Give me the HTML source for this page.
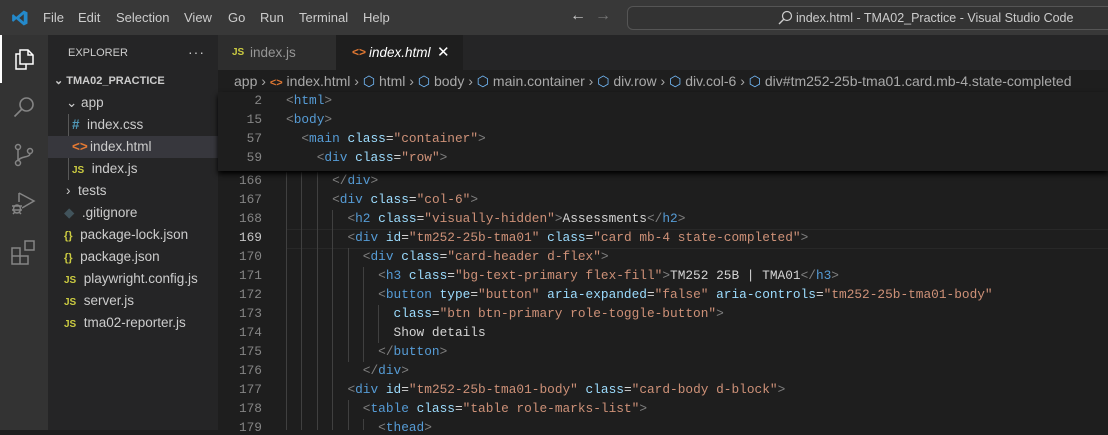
<!DOCTYPE html>
<html><head><meta charset="utf-8"><style>
*{margin:0;padding:0;box-sizing:border-box}
body{width:1108px;height:430px;overflow:hidden;background:#1e1e1e;font-family:"Liberation Sans",sans-serif;font-size:13px;color:#ccc;position:relative}
.abs{position:absolute}
#title{left:0;top:0;width:1108px;height:35px;background:#383838}
.menu{top:10px;font-size:13px;color:#ccc}
#act{left:0;top:35px;width:48px;height:395px;background:#333}
#side{left:48px;top:35px;width:170px;height:395px;background:#252526}
.row{position:absolute;left:0;width:170px;height:22px;line-height:22px;font-size:13.5px;color:#ccc;white-space:nowrap}
#tabs{left:218px;top:35px;width:890px;height:35px;background:#252526}
.mono{font-family:"Liberation Mono",monospace;font-size:12.8px;white-space:pre}
.ln{position:absolute;left:218px;width:44px;text-align:right;color:#858585}
.cd{position:absolute;left:286px}
.t{color:#808080}.n{color:#569cd6}.a{color:#9cdcfe}.s{color:#ce9178}.x{color:#d4d4d4}
.g{position:absolute;width:1px;background:#404040}
.bc{top:73px;font-size:14px;color:#a9a9a9;white-space:nowrap}
</style></head><body>
<div id="title" class="abs">
<svg class="abs" style="left:11px;top:9px" width="18" height="18" viewBox="0 0 24 24"><path d="M17 2 L22 4.5 V19.5 L17 22 L7 13.5 L3 17 L1.5 16 V8 L3 7 L7 10.5 Z M17 7 L11 12 L17 17 Z" fill="#2489ca"/></svg>
<span class="abs menu" style="left:43px">File</span>
<span class="abs menu" style="left:78px">Edit</span>
<span class="abs menu" style="left:116px">Selection</span>
<span class="abs menu" style="left:184px">View</span>
<span class="abs menu" style="left:228px">Go</span>
<span class="abs menu" style="left:260px">Run</span>
<span class="abs menu" style="left:299px">Terminal</span>
<span class="abs menu" style="left:363px">Help</span>
<span class="abs" style="left:570px;top:7px;font-size:16px;color:#ccc">←</span>
<span class="abs" style="left:595px;top:7px;font-size:16px;color:#777">→</span>
<div class="abs" style="left:627px;top:6px;width:490px;height:24px;border:1px solid #555;border-radius:6px;background:#333"></div>
<svg class="abs" style="left:777px;top:10px" width="16" height="16" viewBox="0 0 16 16"><circle cx="10" cy="6" r="4.5" stroke="#ccc" fill="none" stroke-width="1.2"/><path d="M7 9 L2 14" stroke="#ccc" stroke-width="1.4"/></svg>
<span class="abs" style="left:796px;top:11px;font-size:12.5px;color:#ccc">index.html - TMA02_Practice - Visual Studio Code</span>
</div>
<div id="act" class="abs">
<div class="abs" style="left:0;top:0;width:2px;height:48px;background:#fff"></div>
<svg class="abs" style="left:12px;top:12px" width="24" height="24" viewBox="0 0 24 24" fill="none" stroke="#fff" stroke-width="1.5"><path d="M8 3 H16 L21 8 V17 H8 Z M16 3 V8 H21"/><path d="M8 7 H4 V22 H14 V17"/></svg>
<svg class="abs" style="left:12px;top:60px" width="24" height="24" viewBox="0 0 24 24" fill="none" stroke="#858585" stroke-width="1.6"><circle cx="14.5" cy="9.5" r="6.5"/><path d="M10 14 L2.5 21.5"/></svg>
<svg class="abs" style="left:12px;top:108px" width="24" height="24" viewBox="0 0 24 24" fill="none" stroke="#858585" stroke-width="1.5"><circle cx="6" cy="4" r="2.5"/><circle cx="6" cy="20" r="2.5"/><circle cx="18" cy="8" r="2.5"/><path d="M6 6.5 V17.5 M18 10.5 C18 15 8 13 6.5 17.5"/></svg>
<svg class="abs" style="left:10px;top:155px" width="26" height="26" viewBox="0 0 26 26" fill="none" stroke="#858585" stroke-width="1.5"><path d="M9 3 L24 11 L12 18"/><path d="M9 3 V12"/><ellipse cx="7" cy="19" rx="3.5" ry="4"/><path d="M2 16 H12 M2 20 H12 M3 24 L5 22 M11 24 L9 22"/></svg>
<svg class="abs" style="left:11px;top:205px" width="26" height="26" viewBox="0 0 26 26" fill="none" stroke="#858585" stroke-width="1.5"><path d="M1 8 H9 V24 H1 Z M1 16 H17 V24 H9"/><rect x="14" y="1" width="9" height="9"/></svg>
</div>
<div id="side" class="abs">
<div class="row" style="top:7px;left:20px;font-size:11px">EXPLORER</div>
<div class="row" style="top:6px;left:140px;font-size:14px;letter-spacing:1px">···</div>
<div class="row" style="top:35px;left:6px;font-size:11px;font-weight:bold">⌄ TMA02_PRACTICE</div>
<div class="row" style="top:57px;left:18px">⌄ app</div>
<div class="abs" style="left:20px;top:79px;width:1px;height:66px;background:#585858"></div>
<div class="row" style="top:79px;left:24px"><span style="color:#519aba;font-weight:bold">#</span>&nbsp; index.css</div>
<div class="row" style="top:101px;left:0;background:#37373d"><span style="position:absolute;left:24px;color:#e37933;font-weight:bold">&lt;&gt;</span><span style="position:absolute;left:42px">index.html</span></div>
<div class="row" style="top:123px;left:24px"><span style="color:#cbcb41;font-size:10px;font-weight:bold">JS</span>&nbsp; index.js</div>
<div class="row" style="top:145px;left:18px">›&nbsp; tests</div>
<div class="row" style="top:167px;left:16px"><span style="color:#41535b">◆</span>&nbsp; .gitignore</div>
<div class="row" style="top:189px;left:16px"><span style="color:#cbcb41;font-weight:bold;font-size:11px">{}</span>&nbsp; package-lock.json</div>
<div class="row" style="top:211px;left:16px"><span style="color:#cbcb41;font-weight:bold;font-size:11px">{}</span>&nbsp; package.json</div>
<div class="row" style="top:233px;left:16px"><span style="color:#cbcb41;font-size:10px;font-weight:bold">JS</span>&nbsp; playwright.config.js</div>
<div class="row" style="top:255px;left:16px"><span style="color:#cbcb41;font-size:10px;font-weight:bold">JS</span>&nbsp; server.js</div>
<div class="row" style="top:277px;left:16px"><span style="color:#cbcb41;font-size:10px;font-weight:bold">JS</span>&nbsp; tma02-reporter.js</div>
</div>
<div id="tabs" class="abs">
<div class="abs" style="left:0;top:0;width:118px;height:35px;background:#2d2d2d;line-height:35px;color:#969696;font-size:13.5px"><span style="position:absolute;left:14px;color:#cbcb41;font-size:10px;font-weight:bold">JS</span><span style="position:absolute;left:32px">index.js</span></div>
<div class="abs" style="left:118px;top:0;width:127px;height:35px;background:#1e1e1e;line-height:35px;color:#fff;font-size:13.5px"><span style="position:absolute;left:16px;color:#e37933;font-weight:bold;font-size:12px">&lt;&gt;</span><span style="position:absolute;left:33px;font-style:italic">index.html</span><span style="position:absolute;left:101px;font-size:15px">✕</span></div>
</div>
<div class="abs bc" style="left:234px">app <span>›</span> <span style="color:#e37933;font-weight:bold;font-size:11px">&lt;&gt;</span> index.html <span>›</span> <span style="color:#75beff">⬡</span> html <span>›</span> <span style="color:#75beff">⬡</span> body <span>›</span> <span style="color:#75beff">⬡</span> main.container <span>›</span> <span style="color:#75beff">⬡</span> div.row <span>›</span> <span style="color:#75beff">⬡</span> div.col-6 <span>›</span> <span style="color:#75beff">⬡</span> div#tm252-25b-tma01.card.mb-4.state-completed</div>
<div class="abs" style="left:218px;top:92px;width:890px;height:79px;background:#1e1e1e;box-shadow:0 3px 5px #000;z-index:2">
</div>
<div class="abs mono" style="left:0;top:0;z-index:3">
<div class="ln" style="top:93px">2</div><div class="cd" style="top:93px"><span class="t">&lt;</span><span class="n">html</span><span class="t">&gt;</span></div>
<div class="ln" style="top:112px">15</div><div class="cd" style="top:112px"><span class="t">&lt;</span><span class="n">body</span><span class="t">&gt;</span></div>
<div class="ln" style="top:131px">57</div><div class="cd" style="top:131px">  <span class="t">&lt;</span><span class="n">main</span> <span class="a">class</span><span class="x">=</span><span class="s">"container"</span><span class="t">&gt;</span></div>
<div class="ln" style="top:150px">59</div><div class="cd" style="top:150px">    <span class="t">&lt;</span><span class="n">div</span> <span class="a">class</span><span class="x">=</span><span class="s">"row"</span><span class="t">&gt;</span></div>
</div>
<div class="abs" style="left:286px;top:229px;width:822px;height:20px;border:1px solid #282828;border-left:none;border-right:none"></div>
<div class="g" style="left:286px;top:172px;height:258px"></div>
<div class="g" style="left:301px;top:172px;height:258px"></div>
<div class="g" style="left:317px;top:172px;height:258px"></div>
<div class="g" style="left:332px;top:210px;height:220px"></div>
<div class="g" style="left:348px;top:248px;height:114px"></div>
<div class="g" style="left:363px;top:267px;height:95px"></div>
<div class="g" style="left:348px;top:400px;height:30px"></div>
<div class="g" style="left:363px;top:419px;height:11px"></div>
<div class="g" style="left:378px;top:305px;height:38px"></div>
<div class="abs mono" style="left:0;top:0">
<div class="ln" style="top:173px">166</div><div class="cd" style="top:173px">      <span class="t">&lt;/</span><span class="n">div</span><span class="t">&gt;</span></div>
<div class="ln" style="top:192px">167</div><div class="cd" style="top:192px">      <span class="t">&lt;</span><span class="n">div</span> <span class="a">class</span><span class="x">=</span><span class="s">"col-6"</span><span class="t">&gt;</span></div>
<div class="ln" style="top:211px">168</div><div class="cd" style="top:211px">        <span class="t">&lt;</span><span class="n">h2</span> <span class="a">class</span><span class="x">=</span><span class="s">"visually-hidden"</span><span class="t">&gt;</span><span class="x">Assessments</span><span class="t">&lt;/</span><span class="n">h2</span><span class="t">&gt;</span></div>
<div class="ln" style="top:230px;color:#c6c6c6">169</div><div class="cd" style="top:230px">        <span class="t">&lt;</span><span class="n">div</span> <span class="a">id</span><span class="x">=</span><span class="s">"tm252-25b-tma01"</span> <span class="a">class</span><span class="x">=</span><span class="s">"card mb-4 state-completed"</span><span class="t">&gt;</span></div>
<div class="ln" style="top:249px">170</div><div class="cd" style="top:249px">          <span class="t">&lt;</span><span class="n">div</span> <span class="a">class</span><span class="x">=</span><span class="s">"card-header d-flex"</span><span class="t">&gt;</span></div>
<div class="ln" style="top:268px">171</div><div class="cd" style="top:268px">            <span class="t">&lt;</span><span class="n">h3</span> <span class="a">class</span><span class="x">=</span><span class="s">"bg-text-primary flex-fill"</span><span class="t">&gt;</span><span class="x">TM252 25B | TMA01</span><span class="t">&lt;/</span><span class="n">h3</span><span class="t">&gt;</span></div>
<div class="ln" style="top:287px">172</div><div class="cd" style="top:287px">            <span class="t">&lt;</span><span class="n">button</span> <span class="a">type</span><span class="x">=</span><span class="s">"button"</span> <span class="a">aria-expanded</span><span class="x">=</span><span class="s">"false"</span> <span class="a">aria-controls</span><span class="x">=</span><span class="s">"tm252-25b-tma01-body"</span></div>
<div class="ln" style="top:306px">173</div><div class="cd" style="top:306px">              <span class="a">class</span><span class="x">=</span><span class="s">"btn btn-primary role-toggle-button"</span><span class="t">&gt;</span></div>
<div class="ln" style="top:325px">174</div><div class="cd" style="top:325px">              <span class="x">Show details</span></div>
<div class="ln" style="top:344px">175</div><div class="cd" style="top:344px">            <span class="t">&lt;/</span><span class="n">button</span><span class="t">&gt;</span></div>
<div class="ln" style="top:363px">176</div><div class="cd" style="top:363px">          <span class="t">&lt;/</span><span class="n">div</span><span class="t">&gt;</span></div>
<div class="ln" style="top:382px">177</div><div class="cd" style="top:382px">        <span class="t">&lt;</span><span class="n">div</span> <span class="a">id</span><span class="x">=</span><span class="s">"tm252-25b-tma01-body"</span> <span class="a">class</span><span class="x">=</span><span class="s">"card-body d-block"</span><span class="t">&gt;</span></div>
<div class="ln" style="top:401px">178</div><div class="cd" style="top:401px">          <span class="t">&lt;</span><span class="n">table</span> <span class="a">class</span><span class="x">=</span><span class="s">"table role-marks-list"</span><span class="t">&gt;</span></div>
<div class="ln" style="top:420px">179</div><div class="cd" style="top:420px">            <span class="t">&lt;</span><span class="n">thead</span><span class="t">&gt;</span></div>
</div>
</body></html>
